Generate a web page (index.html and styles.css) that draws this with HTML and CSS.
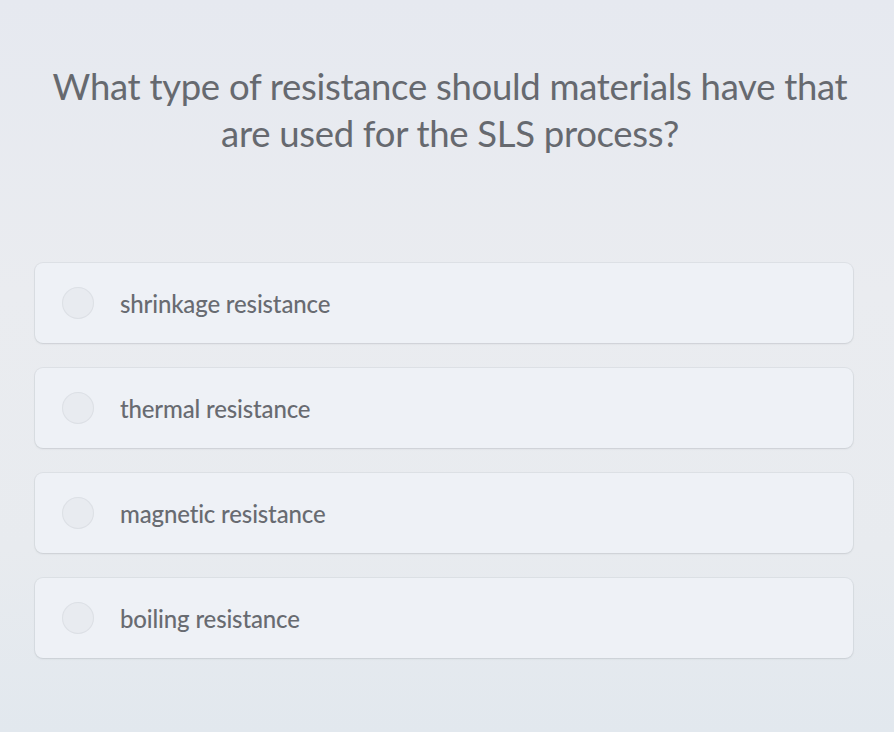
FILE: index.html
```html
<!DOCTYPE html>
<html>
<head>
<meta charset="utf-8">
<link rel="stylesheet" href="styles.css">
</head>
<body>
<main class="quiz">
  <h1 class="question">What type of resistance should materials have that are used for the SLS process?</h1>
  <ul class="options">
    <li class="option"><span class="radio"></span><span class="label">shrinkage resistance</span></li>
    <li class="option"><span class="radio"></span><span class="label">thermal resistance</span></li>
    <li class="option"><span class="radio"></span><span class="label">magnetic resistance</span></li>
    <li class="option"><span class="radio"></span><span class="label">boiling resistance</span></li>
  </ul>
</main>
</body>
</html>
```
FILE: styles.css
```css
html, body {
  margin: 0;
  padding: 0;
}
body {
  width: 894px;
  height: 732px;
  overflow: hidden;
  background: linear-gradient(180deg, #e6e9f0 0%, #eaecf0 40%, #e8ebef 75%, #e2e8ee 100%);
  font-family: Lato, "Open Sans", sans-serif;
  color: #6a6d73;
}
.quiz {
  padding: 63px 41px 0 35px;
}
.question {
  margin: 0 auto;
  width: 830px;
  text-align: center;
  font-size: 36.5px;
  font-weight: 400;
  line-height: 47px;
  letter-spacing: -0.3px;
  color: #66696f;
}
.options {
  list-style: none;
  margin: 106px 0 0 0;
  padding: 0;
  display: flex;
  flex-direction: column;
  gap: 25px;
}
.option {
  height: 80px;
  display: flex;
  align-items: center;
  background: #eef1f6;
  border-radius: 8px;
  box-shadow: 0 1px 2px rgba(120, 125, 135, 0.18), 0 0 0 1px rgba(200, 205, 212, 0.35);
  padding-left: 27px;
}
.radio {
  width: 32px;
  height: 32px;
  border-radius: 50%;
  background: #e8ebf0;
  box-shadow: inset 0 0 0 1px rgba(210, 214, 220, 0.5);
  flex: none;
}
.label {
  margin-left: 26px;
  font-size: 24px;
  font-weight: 500;
  color: #686b71;
  letter-spacing: -0.15px;
}
```
